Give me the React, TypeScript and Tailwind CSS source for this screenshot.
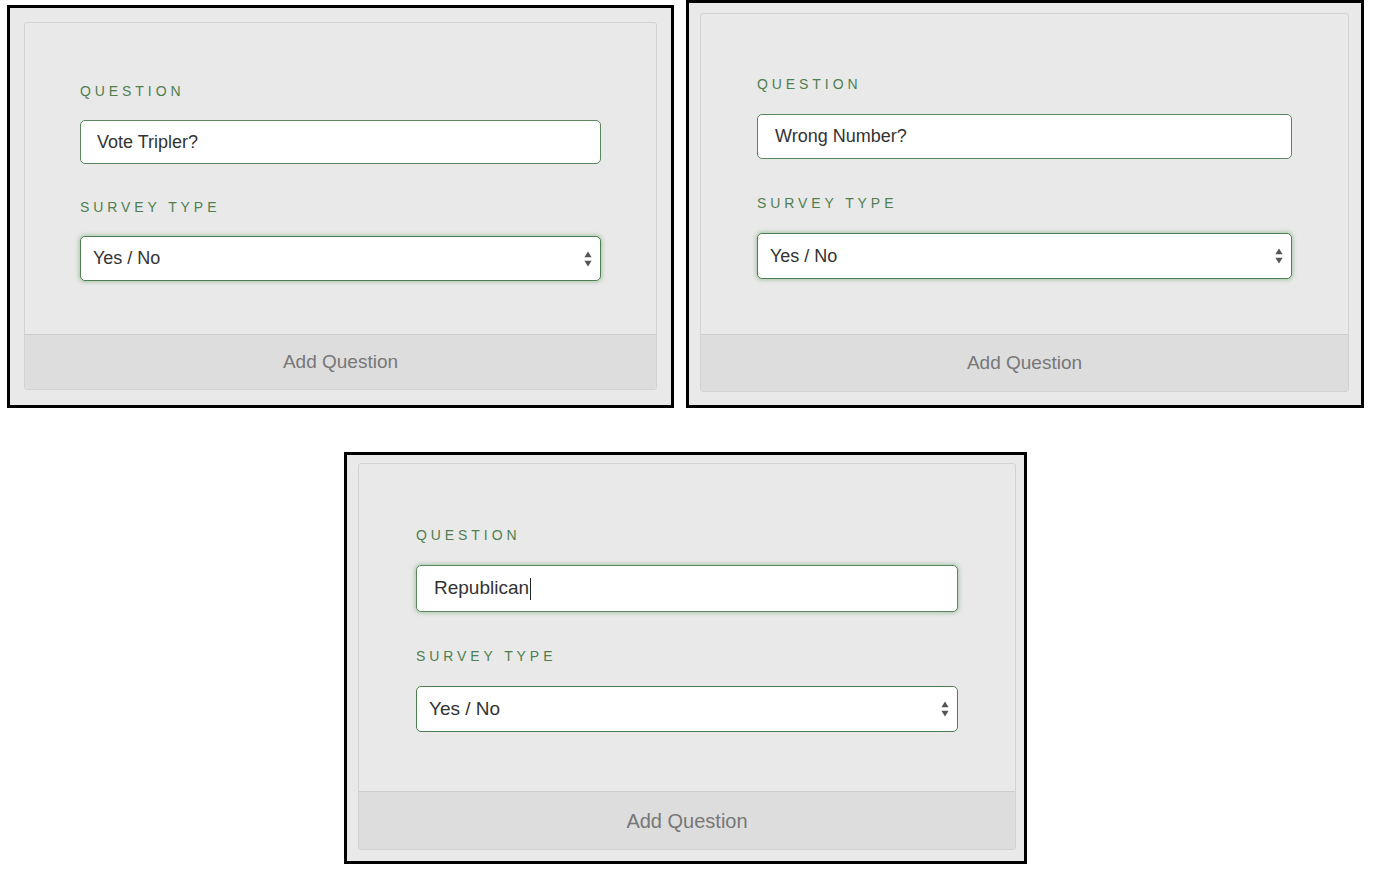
import React from 'react'

interface Shot {
    question: string
    caret?: boolean
    focus: 'input' | 'select'
    frame: string
    card: string
    body: string
    labelGap: string
    sectionGap: string
    inputH: string
    selectH: string
    footer: string
    footerText: string
}

const shots: Shot[] = [
    {
        question: 'Vote Tripler?',
        focus: 'select',
        frame: 'w-[667px] h-[403px] pl-[14px] pt-[14px] pr-[14px] pb-[15px]',
        card: 'w-[634px]',
        body: 'pt-[60px] px-[55px]',
        labelGap: 'mb-[21px]',
        sectionGap: 'mt-[35px]',
        inputH: 'h-[44px] text-[18px] pl-[16px]',
        selectH: 'h-[45px] text-[18px] pl-[12px]',
        footer: 'h-[55px]',
        footerText: 'text-[19px]',
    },
    {
        question: 'Wrong Number?',
        focus: 'select',
        frame: 'w-[678px] h-[408px] pl-[11px] pt-[10px] pr-[12px] pb-[13px]',
        card: 'w-[650px]',
        body: 'pt-[62px] px-[56px]',
        labelGap: 'mb-[22px]',
        sectionGap: 'mt-[36px]',
        inputH: 'h-[45px] text-[18px] pl-[17px]',
        selectH: 'h-[46px] text-[18px] pl-[12px]',
        footer: 'h-[57px]',
        footerText: 'text-[19px]',
    },
    {
        question: 'Republican',
        caret: true,
        focus: 'input',
        frame: 'w-[683px] h-[412px] pl-[11px] pt-[8px] pr-[8px] pb-[11px]',
        card: 'w-[659px]',
        body: 'pt-[63px] px-[57px]',
        labelGap: 'mb-[22px]',
        sectionGap: 'mt-[36px]',
        inputH: 'h-[47px] text-[19px] pl-[17px]',
        selectH: 'h-[46px] text-[19px] pl-[12px]',
        footer: 'h-[58px]',
        footerText: 'text-[20px]',
    },
]

const glow = 'shadow-[0_0_4px_1px_rgba(90,150,90,0.45)]'

function Arrows() {
    return (
        <svg width="8" height="16" viewBox="0 0 8 16" className="mr-[8px]">
            <path d="M4 0.5 L7.6 6.2 L0.4 6.2 Z" fill="#555" />
            <path d="M4 15.5 L7.6 9.8 L0.4 9.8 Z" fill="#555" />
        </svg>
    )
}

function Frame({ s }: { s: Shot }) {
    return (
        <div className={`border-[3px] border-black bg-[#e9e9e9] flex ${s.frame}`}>
            <div className={`flex flex-col h-full border border-[#d2d2d2] rounded-[3px] bg-[#e9e9e9] overflow-hidden ${s.card}`}>
                <div className={`flex-1 ${s.body}`}>
                    <div className={`text-[14px] leading-[16px] tracking-[0.28em] text-[#4f7f50] ${s.labelGap}`}>QUESTION</div>
                    <div
                        className={`flex items-center bg-white border border-[#5a875d] rounded-[5px] text-[#333] ${s.inputH} ${s.focus === 'input' ? glow : ''}`}
                    >
                        <span>{s.question}</span>
                        {s.caret && <span className="w-px h-[22px] bg-[#222] ml-px" />}
                    </div>
                    <div className={`text-[14px] leading-[16px] tracking-[0.28em] text-[#4f7f50] ${s.sectionGap} ${s.labelGap}`}>SURVEY TYPE</div>
                    <div
                        className={`flex items-center justify-between bg-white border border-[#4e7f53] rounded-[5px] text-[#333] ${s.selectH} ${s.focus === 'select' ? glow : ''}`}
                    >
                        <span>Yes / No</span>
                        <Arrows />
                    </div>
                </div>
                <div className={`flex items-center justify-center bg-[#dddddd] border-t border-[#cdcdcd] text-[#777] ${s.footer} ${s.footerText}`}>
                    Add Question
                </div>
            </div>
        </div>
    )
}

export default function App() {
    return (
        <div className="w-[1376px] h-[872px] bg-white font-['Liberation_Sans',Arial,sans-serif]">
            <div className="flex items-start h-[408px]">
                <div className="ml-[7px] mt-[5px]">
                    <Frame s={shots[0]} />
                </div>
                <div className="ml-[12px]">
                    <Frame s={shots[1]} />
                </div>
            </div>
            <div className="mt-[44px] ml-[344px]">
                <Frame s={shots[2]} />
            </div>
        </div>
    )
}
